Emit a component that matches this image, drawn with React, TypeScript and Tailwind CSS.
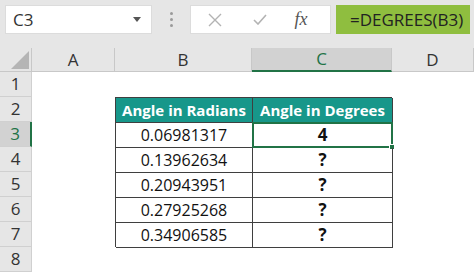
import React from "react";

const COLS = ["A", "B", "C", "D"];
const DATA = ["0.06981317", "0.13962634", "0.20943951", "0.27925268", "0.34906585"];

const font = { fontFamily: "'Open Sans', 'Liberation Sans', sans-serif" };

const FormulaBar: React.FC = () => (
  <div className="h-[48px] bg-[#e6e6e6] flex items-start pt-[5px] pl-[5px] pr-[4px]">
    {/* name box */}
    <div className="w-[147px] h-[29px] bg-white border border-[#dcdcdc] flex items-center justify-between pl-[7px] pr-[10px]">
      <span className="text-[17px] text-[#333]">C3</span>
      <svg width="8" height="5" viewBox="0 0 8 5">
        <path d="M0 0 L8 0 L4 5 Z" fill="#555" />
      </svg>
    </div>
    <div className="w-[38px] h-[29px] flex items-center justify-center">
      <div className="flex flex-col gap-[3px]">
        <span className="w-[3px] h-[3px] rounded-full bg-[#9a9a9a]" />
        <span className="w-[3px] h-[3px] rounded-full bg-[#9a9a9a]" />
        <span className="w-[3px] h-[3px] rounded-full bg-[#9a9a9a]" />
      </div>
    </div>
    {/* formula area */}
    <div className="w-[141px] h-[29px] bg-white border border-[#dcdcdc] flex items-center">
      <div className="w-[48px] flex justify-center">
        <svg width="14" height="14" viewBox="0 0 14 14">
          <path d="M1 1 L13 13 M13 1 L1 13" stroke="#b3b3b3" strokeWidth="1.4" />
        </svg>
      </div>
      <div className="w-[42px] flex justify-center">
        <svg width="14" height="11" viewBox="0 0 14 11">
          <path d="M1 6 L5 10 L13 1" stroke="#b3b3b3" strokeWidth="1.6" fill="none" />
        </svg>
      </div>
      <div className="w-[40px] flex justify-center">
        <span className="text-[18px] italic text-[#555]" style={{ fontFamily: "'Liberation Serif', serif" }}>
          fx
        </span>
      </div>
    </div>
    <div className="ml-[5px] flex-1 h-[29px] bg-[#8fbe3f] flex items-center pl-[14px]">
      <span className="text-[17px] text-[#222]">=DEGREES(B3)</span>
    </div>
  </div>
);

const App: React.FC = () => {
  return (
    <div className="w-[474px] h-[273px] overflow-hidden bg-white" style={font}>
      <FormulaBar />
      <div className="grid grid-cols-[32px_83px_137px_140px_82px] grid-rows-[24px_repeat(8,25px)]">
        {/* corner */}
        <div className="bg-[#e6e6e6] border-r border-b border-[#c8c8c8] flex items-end justify-end p-[2px]">
          <svg width="18" height="18" viewBox="0 0 18 18">
            <path d="M18 0 L18 18 L0 18 Z" fill="#b5b5b5" />
          </svg>
        </div>
        {COLS.map((c) => (
          <div
            key={c}
            className={
              c === "C"
                ? "bg-[#d2d2d2] border-r border-[#c8c8c8] border-b-2 border-b-[#217346] flex items-center justify-center text-[17px] text-[#217346]"
                : "bg-[#e6e6e6] border-r border-b border-[#c8c8c8] flex items-center justify-center text-[17px] text-[#333]"
            }
          >
            {c}
          </div>
        ))}

        {/* row headers */}
        {[1, 2, 3, 4, 5, 6, 7, 8].map((r) => (
          <div
            key={r}
            className={
              r === 3
                ? "col-start-1 bg-[#d2d2d2] border-b border-[#d0d0d0] border-r-2 border-r-[#217346] flex items-center justify-center text-[17px] text-[#217346]"
                : "col-start-1 bg-[#e6e6e6] border-b border-r border-[#d0d0d0] flex items-center justify-center text-[17px] text-[#333]"
            }
            style={{ gridRowStart: r + 1 }}
          >
            {r}
          </div>
        ))}

        {/* data table B2:C7 */}
        <div className="col-start-3 col-span-2 row-start-3 row-span-6 grid grid-cols-[137px_140px] grid-rows-[repeat(6,25px)] border-l border-t border-[#3f3f3f]">
          <div className="bg-[#17978a] border-r border-b border-[#3f3f3f] flex items-center justify-center text-white font-bold text-[15px]">
            Angle in Radians
          </div>
          <div className="bg-[#17978a] border-r border-b border-[#3f3f3f] flex items-center justify-center text-white font-bold text-[15px]">
            Angle in Degrees
          </div>
          {DATA.map((v, i) => (
            <React.Fragment key={v}>
              <div className="border-r border-b border-[#3f3f3f] flex items-center justify-center text-[16px] text-[#111]">
                {v}
              </div>
              <div className="relative border-r border-b border-[#3f3f3f] flex items-center justify-center text-[17px] font-bold text-[#111]">
                {i === 0 ? "4" : "?"}
                {i === 0 && (
                  <div className="absolute -left-[1px] -top-[1px] -right-[1px] -bottom-[1px] border-2 border-[#217346]">
                    <div className="absolute -right-[4px] -bottom-[4px] w-[6px] h-[6px] bg-[#217346] border border-white" />
                  </div>
                )}
              </div>
            </React.Fragment>
          ))}
        </div>
      </div>
    </div>
  );
};

export default App;
